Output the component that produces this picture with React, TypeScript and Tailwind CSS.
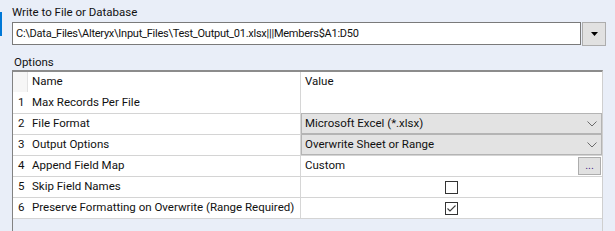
import React from "react";

const ROWS = [
  { n: 1, name: "Max Records Per File", kind: "empty" },
  { n: 2, name: "File Format", kind: "combo", value: "Microsoft Excel (*.xlsx)" },
  { n: 3, name: "Output Options", kind: "combo", value: "Overwrite Sheet or Range" },
  { n: 4, name: "Append Field Map", kind: "button", value: "Custom" },
  { n: 5, name: "Skip Field Names", kind: "check", checked: false },
  { n: 6, name: "Preserve Formatting on Overwrite (Range Required)", kind: "check", checked: true },
];

function Chevron() {
  return (
    <svg width="10" height="6" viewBox="0 0 10 6" className="shrink-0">
      <path d="M0.5 0.5 L5 5 L9.5 0.5" fill="none" stroke="#6b6b6b" strokeWidth="1" />
    </svg>
  );
}

function Checkbox({ checked }: { checked: boolean }) {
  return (
    <div className="w-[13px] h-[13px] border border-[#333333] bg-white flex items-center justify-center">
      {checked && (
        <svg width="11" height="11" viewBox="0 0 11 11">
          <path d="M1.5 5.5 L4 8 L9.5 2.5" fill="none" stroke="#3c3c3c" strokeWidth="1.1" />
        </svg>
      )}
    </div>
  );
}

export default function App() {
  return (
    <div className="relative w-[615px] h-[231px] bg-[#e9eef8] flex flex-col overflow-hidden text-[11.5px] text-[#111111] font-['Roboto','Liberation_Sans',Arial,sans-serif]">
      <div className="absolute left-0 top-[12px] w-[2px] h-[24px] bg-[#0078d7]" />

      <div className="pl-[12px] pt-[4px] leading-[16px]">Write to File or Database</div>

      <div className="flex pl-[12px] mt-[2px] items-start">
        <div className="w-[569px] h-[23px] border border-[#7a7a7a] bg-white px-[3px] flex items-center leading-none whitespace-nowrap text-[11px] tracking-[-0.25px]">
          C:\Data_Files\Alteryx\Input_Files\Test_Output_01.xlsx|||Members$A1:D50
        </div>
        <div className="ml-[1px] w-[24px] h-[24px] border border-[#adadad] bg-[#e1e1e1] flex items-center justify-center">
          <svg width="7" height="4" viewBox="0 0 7 4">
            <path d="M0 0 H7 L3.5 4 Z" fill="#000000" />
          </svg>
        </div>
      </div>

      <div className="pl-[14px] mt-[8px] leading-[16px]">Options</div>

      <div className="ml-[12px] w-[591px] flex-1 border-l border-l-[#828282] border-t-2 border-t-[#8c8c8c] border-r border-r-[#cfcfcf]">
        <div className="grid grid-cols-[15px_273px_301px] h-[20px] bg-white">
          <div className="bg-[#f6f6f6] border-r border-[#e2e2e2]" />
          <div className="pl-[4px] flex items-center border-r border-[#d6d6d6]">Name</div>
          <div className="pl-[4px] flex items-center">Value</div>
        </div>

        {ROWS.map((r, i) => (
          <div
            key={r.n}
            className={`grid grid-cols-[15px_273px_301px] bg-white border-b border-[#d4d4d4] ${i === 0 ? "h-[22px]" : "h-[21px]"}`}
          >
            <div className="pl-[5px] flex items-center">{r.n}</div>
            <div className="pl-[4px] flex items-center border-r border-[#d6d6d6] whitespace-nowrap">{r.name}</div>
            {r.kind === "empty" && <div />}
            {r.kind === "combo" && (
              <div className="-mt-px h-[21px] border border-[#b4b4b4] bg-[#e3e3e3] flex items-center justify-between pl-[3px] pr-[4px]">
                <span>{r.value}</span>
                <Chevron />
              </div>
            )}
            {r.kind === "button" && (
              <div className="flex items-center justify-between pl-[4px] pr-[1px]">
                <span>{r.value}</span>
                <div className="w-[23px] h-[18px] border border-[#adadad] bg-[#e1e1e1] flex items-end justify-center pb-[3px]">
                  <span className="text-[11px] leading-none text-[#4a2a8a]">...</span>
                </div>
              </div>
            )}
            {r.kind === "check" && (
              <div className="flex items-center justify-center">
                <Checkbox checked={!!r.checked} />
              </div>
            )}
          </div>
        ))}
      </div>
    </div>
  );
}
